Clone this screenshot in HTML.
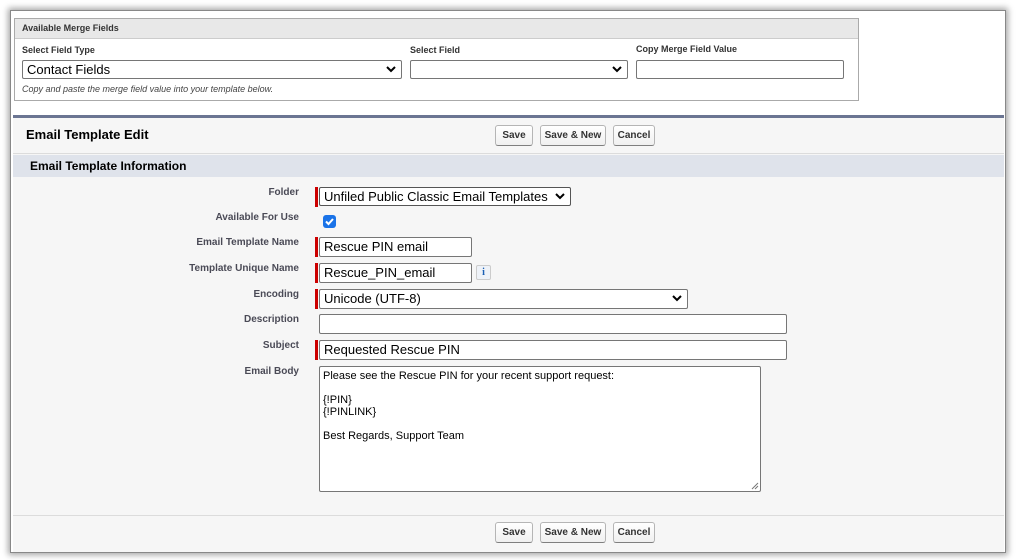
<!DOCTYPE html>
<html><head><meta charset="utf-8"><style>
*{box-sizing:border-box;margin:0;padding:0}
body{width:1016px;height:560px;background:#fff;font-family:"Liberation Sans",Arial,sans-serif;position:relative;overflow:hidden;color:#000}
.a{position:absolute}
.win{left:10px;top:10px;width:996px;height:543px;background:#fff;box-shadow:0 0 6px 2px rgba(0,0,0,.35);border:1px solid #888}
.lbl{font-size:10px;font-weight:bold;color:#333}
.sel{background:#fff;border:1px solid #767676;border-radius:2px;font-size:13px;padding:0 0 0 4px;line-height:17px;height:19px}
.sel .chev{position:absolute;right:5px;top:4px;width:10px;height:8px}
.inp{background:#fff;border:1px solid #767676;border-radius:2px;font-size:13px;padding-left:4px;line-height:18px;height:20px}
.btn{height:21px;border:1px solid #b5b5b5;border-bottom-color:#7f7f7f;border-radius:3px;background:linear-gradient(#fff,#f0f0f0);font-size:10px;font-weight:bold;color:#333;text-align:center;line-height:19px}
.fl{font-size:10px;font-weight:bold;color:#4a4a56;text-align:right;width:200px;left:99px}
.req{left:315px;width:3px;height:20px;background:#c00}
</style></head><body>
<div class="a win"></div>
<div class="a" style="left:14px;top:18px;width:845px;height:83px;border:1px solid #aaa;background:#fff"></div>
<div class="a" style="left:15px;top:19px;width:843px;height:20px;background:#e8e8e8;border-bottom:1px solid #ccc"></div>
<div class="a lbl" style="left:22px;top:23px;font-size:9px">Available Merge Fields</div>
<div class="a lbl" style="left:22px;top:45px;font-size:9px">Select Field Type</div>
<div class="a lbl" style="left:410px;top:45px;font-size:9px">Select Field</div>
<div class="a lbl" style="left:636px;top:44px;font-size:9px">Copy Merge Field Value</div>
<div class="a sel" style="left:22px;top:60px;width:380px">Contact Fields<svg class="chev" viewBox="0 0 10 8"><path d="M1 2l4 4 4-4" stroke="#000" stroke-width="2" fill="none"/></svg></div>
<div class="a sel" style="left:410px;top:60px;width:218px"><svg class="chev" viewBox="0 0 10 8"><path d="M1 2l4 4 4-4" stroke="#000" stroke-width="2" fill="none"/></svg></div>
<div class="a inp" style="left:636px;top:60px;width:208px;height:19px"></div>
<div class="a" style="left:22px;top:84px;font-size:9px;font-style:italic;color:#444">Copy and paste the merge field value into your template below.</div>
<div class="a" style="left:13px;top:115px;width:991px;height:437px;background:#f6f6f6;border-top:3px solid #6b7592"></div>
<div class="a" style="left:26px;top:127px;font-size:13px;font-weight:bold">Email Template Edit</div>
<div class="a btn" style="left:495px;top:125px;width:38px">Save</div>
<div class="a btn" style="left:540px;top:125px;width:66px">Save &amp; New</div>
<div class="a btn" style="left:613px;top:125px;width:42px">Cancel</div>
<div class="a" style="left:13px;top:153px;width:991px;height:1px;background:#dcdcdc"></div>
<div class="a" style="left:13px;top:155px;width:991px;height:22px;background:#dfe3eb"></div>
<div class="a" style="left:30px;top:159px;font-size:12px;font-weight:bold">Email Template Information</div>
<div class="a fl" style="top:187px">Folder</div>
<div class="a req" style="top:187px"></div>
<div class="a sel" style="left:319px;top:187px;width:252px;border-color:#555">Unfiled Public Classic Email Templates<svg class="chev" viewBox="0 0 10 8"><path d="M1 2l4 4 4-4" stroke="#000" stroke-width="2" fill="none"/></svg></div>
<div class="a fl" style="top:212px">Available For Use</div>
<div class="a" style="left:323px;top:215px;width:13px;height:13px;background:#1a73e8;border-radius:3px"><svg viewBox="0 0 13 13" width="13" height="13" style="display:block"><path d="M3 6.5l2.5 2.5 4.5-5" stroke="#fff" stroke-width="2" fill="none"/></svg></div>
<div class="a fl" style="top:237px">Email Template Name</div>
<div class="a req" style="top:237px"></div>
<div class="a inp" style="left:319px;top:237px;width:153px">Rescue PIN email</div>
<div class="a fl" style="top:263px">Template Unique Name</div>
<div class="a req" style="top:263px"></div>
<div class="a inp" style="left:319px;top:263px;width:153px">Rescue_PIN_email</div>
<div class="a" style="left:476px;top:265px;width:15px;height:15px;border:1px solid #ccc;border-radius:2px;background:#eef2f8;color:#1a5fb4;font:bold 10px 'Liberation Serif',serif;text-align:center;line-height:13px">i</div>
<div class="a fl" style="top:289px">Encoding</div>
<div class="a req" style="top:289px"></div>
<div class="a sel" style="left:319px;top:289px;width:369px;height:20px">Unicode (UTF-8)<svg class="chev" viewBox="0 0 10 8"><path d="M1 2l4 4 4-4" stroke="#000" stroke-width="2" fill="none"/></svg></div>
<div class="a fl" style="top:314px">Description</div>
<div class="a inp" style="left:319px;top:314px;width:468px"></div>
<div class="a fl" style="top:340px">Subject</div>
<div class="a req" style="top:340px"></div>
<div class="a inp" style="left:319px;top:340px;width:468px">Requested Rescue PIN</div>
<div class="a fl" style="top:366px">Email Body</div>
<div class="a" style="left:319px;top:366px;width:442px;height:126px;background:#fff;border:1px solid #767676;border-radius:2px;font-size:11px;line-height:12px;padding:3px 3px;white-space:pre">Please see the Rescue PIN for your recent support request:

{!PIN}
{!PINLINK}

Best Regards, Support Team</div>
<svg class="a" style="left:751px;top:482px" width="8" height="8" viewBox="0 0 8 8"><path d="M7 1L1 7M7 4L4 7" stroke="#777" stroke-width="1"/></svg>
<div class="a" style="left:13px;top:515px;width:991px;height:1px;background:#dcdcdc"></div>
<div class="a btn" style="left:495px;top:522px;width:38px">Save</div>
<div class="a btn" style="left:540px;top:522px;width:66px">Save &amp; New</div>
<div class="a btn" style="left:613px;top:522px;width:42px">Cancel</div>
</body></html>
